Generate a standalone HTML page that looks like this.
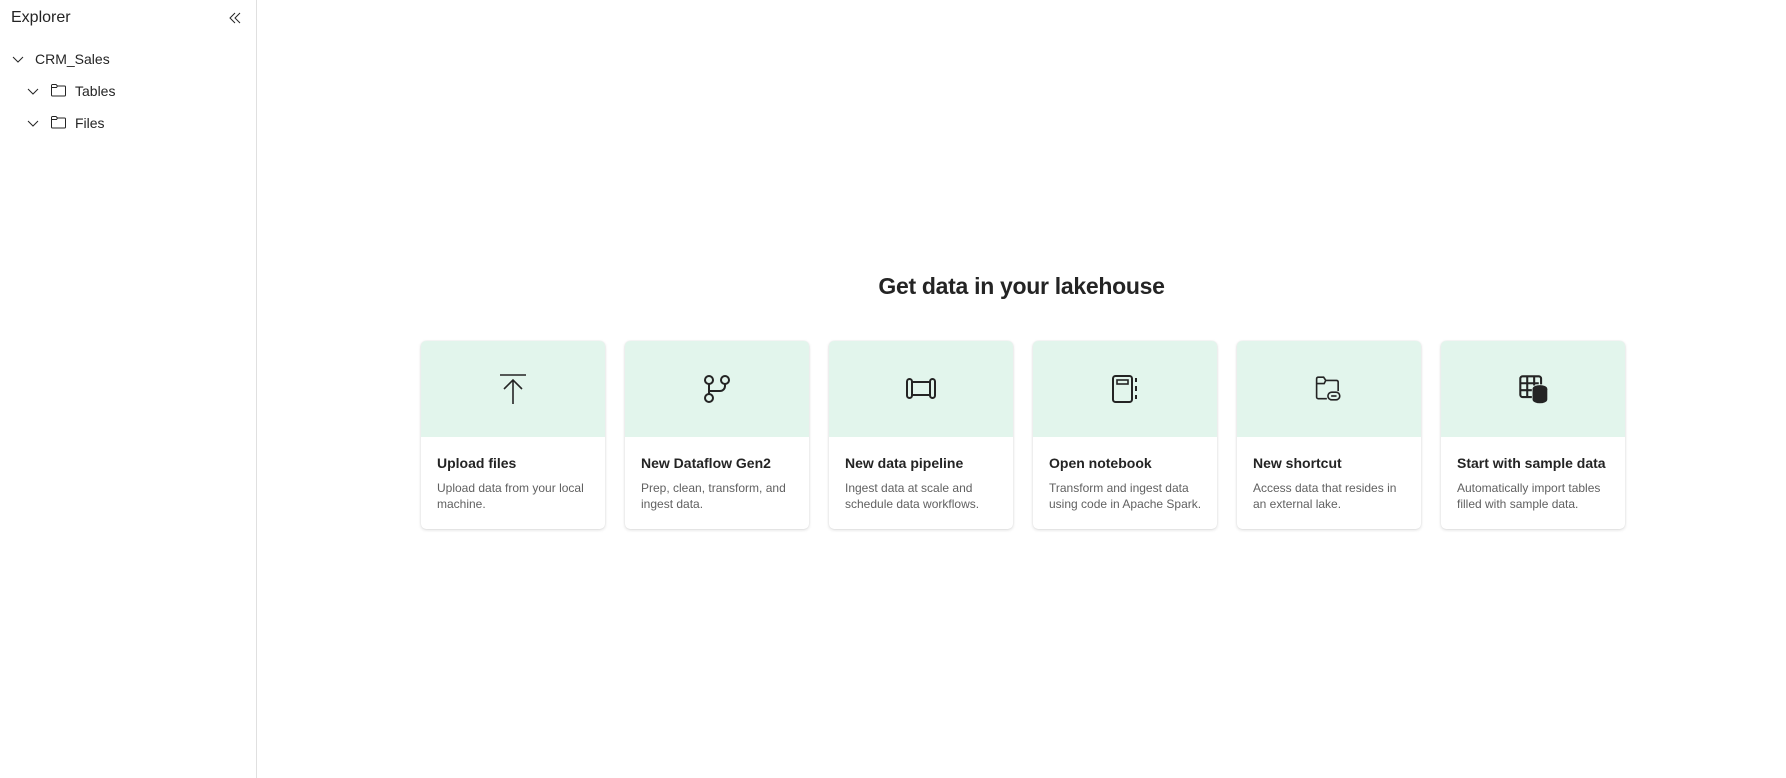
<!DOCTYPE html>
<html><head><style>
*{margin:0;padding:0;box-sizing:border-box}
body{width:1786px;height:778px;background:#fff;font-family:"Segoe UI","Liberation Sans",sans-serif;color:#242424;position:relative;overflow:hidden}
.side{position:absolute;left:0;top:0;width:257px;height:778px;border-right:1px solid #e0e0e0}
.t{position:absolute;font-size:14px}
.card{position:absolute;top:341px;width:184px;height:188px;border-radius:5px;background:#fff;box-shadow:0 1px 3px rgba(0,0,0,.14),0 0 1px rgba(0,0,0,.12);overflow:hidden}
.card .top{height:96px;background:#e2f5ec;display:flex;align-items:center;justify-content:center}
.card h3{font-size:14px;font-weight:600;margin:18px 0 0 16px;color:#242424}
.card p{font-size:12px;line-height:16px;color:#616161;margin:9px 12px 0 16px}
svg{stroke:#242424;fill:none}
</style></head><body>
<div class="side">
<div class="t" style="left:11px;top:9px;font-size:16px">Explorer</div>
<svg style="position:absolute;left:228px;top:11px" width="14" height="14" viewBox="0 0 14 14" stroke-width="1"><path d="M7 2L2 7l5 5M12 2L7 7l5 5"/></svg>
<svg style="position:absolute;left:12px;top:56px" width="12" height="8" viewBox="0 0 12 8"><path d="M1 1l5 5 5-5"/></svg>
<div class="t" style="left:35px;top:51px">CRM_Sales</div>
<svg style="position:absolute;left:27px;top:88px" width="12" height="8" viewBox="0 0 12 8"><path d="M1 1l5 5 5-5"/></svg>
<svg style="position:absolute;left:50px;top:83px" width="17" height="15" viewBox="0 0 17 15"><path d="M1.5 2.5a1 1 0 0 1 1-1h3.5l1.5 1.5h7a1 1 0 0 1 1 1v8a1 1 0 0 1-1 1h-12a1 1 0 0 1-1-1z M1.5 4.5h5l1-1.5"/></svg>
<div class="t" style="left:75px;top:83px">Tables</div>
<svg style="position:absolute;left:27px;top:120px" width="12" height="8" viewBox="0 0 12 8"><path d="M1 1l5 5 5-5"/></svg>
<svg style="position:absolute;left:50px;top:115px" width="17" height="15" viewBox="0 0 17 15"><path d="M1.5 2.5a1 1 0 0 1 1-1h3.5l1.5 1.5h7a1 1 0 0 1 1 1v8a1 1 0 0 1-1 1h-12a1 1 0 0 1-1-1z M1.5 4.5h5l1-1.5"/></svg>
<div class="t" style="left:75px;top:115px">Files</div>
</div>
<div style="position:absolute;left:257px;width:1529px;top:273px;text-align:center;font-size:23px;font-weight:600;letter-spacing:-0.3px">Get data in your lakehouse</div>

<div class="card" style="left:421px"><div class="top"><svg width="30" height="32" viewBox="0 0 30 32" stroke-width="1.6"><path d="M2 2h26M15 31V7M6 16l9-9 9 9"/></svg></div><h3>Upload files</h3><p>Upload data from your local machine.</p></div>
<div class="card" style="left:625px"><div class="top"><svg width="28" height="30" viewBox="0 0 28 30" stroke-width="2"><circle cx="6" cy="6" r="4"/><circle cx="22" cy="6" r="4"/><circle cx="6" cy="24" r="4"/><path d="M6 10v10M6 17h11a5 5 0 0 0 5-5v-2"/></svg></div><h3>New Dataflow Gen2</h3><p>Prep, clean, transform, and ingest data.</p></div>
<div class="card" style="left:829px"><div class="top"><svg width="30" height="22" viewBox="0 0 30 22" stroke-width="2"><rect x="1" y="1" width="5" height="19" rx="2.5"/><rect x="24" y="1" width="5" height="19" rx="2.5"/><path d="M6 4h18M6 17h18"/></svg></div><h3>New data pipeline</h3><p>Ingest data at scale and schedule data workflows.</p></div>
<div class="card" style="left:1033px"><div class="top"><svg width="28" height="30" viewBox="0 0 28 30" stroke-width="2"><rect x="2" y="2" width="19" height="26" rx="2.5"/><rect x="6" y="6" width="11" height="4" stroke-width="1.6"/><path d="M25 4v4M25 12v5M25 21v4"/></svg></div><h3>Open notebook</h3><p>Transform and ingest data using code in Apache Spark.</p></div>
<div class="card" style="left:1237px"><div class="top"><svg width="28" height="26" viewBox="0 0 26 24" stroke-width="1.5"><path d="M11 21H3a1.5 1.5 0 0 1-1.5-1.5v-17A1.5 1.5 0 0 1 3 1h5l2 3h10a1.5 1.5 0 0 1 1.5 1.5V14M1.5 7h7l1.5-3"/><rect x="12" y="15" width="11" height="7" rx="3.5"/><path d="M15 18.5h5"/></svg></div><h3>New shortcut</h3><p>Access data that resides in an external lake.</p></div>
<div class="card" style="left:1441px"><div class="top"><svg width="30" height="30" viewBox="0 0 26 26" stroke-width="1.8"><path d="M12 20H4a2 2 0 0 1-2-2V4a2 2 0 0 1 2-2h14a2 2 0 0 1 2 2v5M2 8h16M2 14h10M8 2v18M14 2v8"/><ellipse cx="19" cy="13" rx="5.5" ry="2.5" fill="#242424"/><path d="M13.5 13v9c0 1.4 2.5 2.5 5.5 2.5s5.5-1.1 5.5-2.5v-9" fill="#242424"/></svg></div><h3>Start with sample data</h3><p>Automatically import tables filled with sample data.</p></div>
</body></html>
